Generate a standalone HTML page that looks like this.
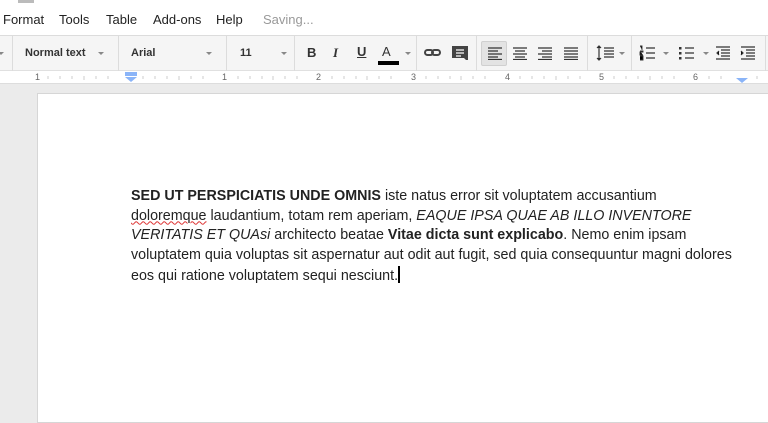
<!DOCTYPE html>
<html><head><style>
*{margin:0;padding:0;box-sizing:border-box}
body{width:768px;height:410px;overflow:hidden;background:#ebebeb;font-family:"Liberation Sans",Arial,sans-serif;position:relative}
.menu{position:absolute;left:0;top:0;width:768px;height:35px;background:#fff;font-size:13px;color:#222}
.menu span{position:absolute;top:12px}
.tb{position:absolute;left:0;top:35px;width:768px;height:36px;background:#f5f5f5;border-top:1px solid #dcdcdc;border-bottom:1px solid #e0e0e0}
.sep{position:absolute;top:0;width:1px;height:35px;background:#dcdcdc}
.t{position:absolute;font-size:11px;color:#333;font-weight:bold;top:11px}
.dd{position:absolute;top:16px;width:0;height:0;border-left:3px solid transparent;border-right:3px solid transparent;border-top:3px solid #888}
.ruler{position:absolute;left:0;top:71px;width:768px;height:13px;background:#fff;border-bottom:1px solid #ddd}
.ruler span{position:absolute;top:1px;font-size:9px;color:#666}
.page{position:absolute;left:37px;top:93px;width:740px;height:330px;background:#fff;border:1px solid #d6d6d6}
.txt{position:absolute;left:131px;top:187px;width:605px;font-size:14.3px;line-height:19.7px;color:#222}
.ic{position:absolute}
</style></head><body>
<div class="menu">
<span style="left:-1px;top:-6px;width:14px;height:4px;background:#aaa;display:block;position:absolute"></span>
<span style="left:18px;top:-6px;width:16px;height:9px;background:#bbb;position:absolute"></span>
<span style="left:3px">Format</span><span style="left:59px">Tools</span><span style="left:106px">Table</span><span style="left:153px">Add-ons</span><span style="left:216px">Help</span><span style="left:263px;color:#999">Saving...</span>
</div>
<div class="tb">
<div class="dd" style="left:-2px"></div>
<div class="sep" style="left:12px"></div>
<span class="t" style="left:25px;font-weight:bold">Normal text</span><div class="dd" style="left:98px"></div>
<div class="sep" style="left:118px"></div>
<span class="t" style="left:131px">Arial</span><div class="dd" style="left:206px"></div>
<div class="sep" style="left:226px"></div>
<span class="t" style="left:240px">11</span><div class="dd" style="left:281px"></div>
<div class="sep" style="left:294px"></div>
<span class="t" style="left:307px;font-size:13px;top:9px">B</span>
<span class="t" style="left:333px;font-size:13px;top:9px;font-style:italic;font-family:'Liberation Serif',serif">I</span>
<span class="t" style="left:357px;font-size:13px;top:8px;text-decoration:underline">U</span>
<span class="t" style="left:382px;font-size:13px;top:8px;font-weight:normal">A</span>
<div style="position:absolute;left:378px;top:25px;width:21px;height:4px;background:#000"></div>
<div class="dd" style="left:405px"></div>
<div class="sep" style="left:416px"></div>
<svg class="ic" style="left:424px;top:10px" width="18" height="14"><rect x="1" y="4" width="8" height="5" rx="2.5" fill="none" stroke="#444" stroke-width="2"/><rect x="8" y="4" width="8" height="5" rx="2.5" fill="none" stroke="#444" stroke-width="2"/></svg>
<svg class="ic" style="left:451px;top:9px" width="18" height="16"><path d="M1 1h16v14h-2l-2-2H1z" fill="#444"/><path d="M5 5h8M5 8h8M5 11h5" stroke="#fff" stroke-width="1.3"/></svg>
<div class="sep" style="left:476px"></div>
<div style="position:absolute;left:481px;top:5px;width:26px;height:25px;background:#e3e3e3;border:1px solid #d0d0d0;border-radius:2px"></div>
<svg class="ic" style="left:486px;top:10px" width="110" height="14" stroke="#333" stroke-width="1.2">
<path d="M2 2h14M2 5h10M2 8h14M2 11h10M2 13.5h14"/>
<path d="M27 2h14M29 5h10M27 8h14M29 11h10M27 13.5h14"/>
<path d="M52 2h14M56 5h10M52 8h14M56 11h10M52 13.5h14"/>
<path d="M78 2h14M78 5h14M78 8h14M78 11h14M78 13.5h14"/>
</svg>
<div class="sep" style="left:587px"></div>
<svg class="ic" style="left:596px;top:9px" width="30" height="16" stroke="#333" stroke-width="1.2"><path d="M3 1v14M1 3l2-2 2 2M1 13l2 2 2-2M8 3h10M8 6h10M8 9h10M8 12h10"/></svg>
<div class="dd" style="left:619px"></div>
<div class="sep" style="left:631px"></div>
<svg class="ic" style="left:639px;top:9px" width="120" height="16" stroke="#333" stroke-width="1.2"><path d="M7 3h9M7 8h9M7 13h9"/><path d="M1 1h2v4M1 6h3v1H1v3h3M1 11h3v4H1" stroke-width="0.9"/>
<path d="M46 3h9M46 8h9M46 13h9"/><rect x="40" y="2" width="2.5" height="2.5" fill="#333" stroke="none"/><rect x="40" y="7" width="2.5" height="2.5" fill="#333" stroke="none"/><rect x="40" y="12" width="2.5" height="2.5" fill="#333" stroke="none"/>
<path d="M77 2h14M82 5h9M82 8h9M82 11h9M77 14h14"/><path d="M80 6l-2 2 2 2" />
<path d="M102 2h14M107 5h9M107 8h9M107 11h9M102 14h14"/><path d="M102 6l2 2-2 2"/></svg>
<div class="dd" style="left:663px"></div><div class="dd" style="left:703px"></div>
<div class="sep" style="left:765px"></div>
</div>
<div class="ruler">
<span style="left:35px">1</span><span style="left:222px">1</span><span style="left:316px">2</span><span style="left:411px">3</span><span style="left:505px">4</span><span style="left:599px">5</span><span style="left:693px">6</span>
<svg style="position:absolute;left:0;top:0" width="768" height="13"><g stroke="#ccc" stroke-width="1">
<path d="M48 5v3M60 5v3M72 5v3M84 5v4M96 5v3M108 5v3M143 5v3M155 5v3M167 5v3M179 5v4M191 5v3M203 5v3M238 5v3M250 5v3M262 5v3M273 5v4M285 5v3M297 5v3M332 5v3M344 5v3M356 5v3M367 5v4M379 5v3M391 5v3M426 5v3M438 5v3M450 5v3M461 5v4M473 5v3M485 5v3M520 5v3M532 5v3M544 5v3M556 5v4M568 5v3M580 5v3M614 5v3M626 5v3M638 5v3M650 5v4M662 5v3M674 5v3M709 5v3M721 5v3M757 5v3"/></g>
<rect x="125" y="1" width="12" height="4" fill="#8ab4f8"/><path d="M125 6h12l-6 5z" fill="#8ab4f8"/><path d="M736 7h12l-6 5z" fill="#8ab4f8"/></svg>
</div>
<div class="page"></div>
<div class="txt"><b>SED UT PERSPICIATIS UNDE OMNIS</b> iste natus error sit voluptatem accusantium <span style="text-decoration:underline wavy #d33;text-decoration-thickness:1px">doloremque</span> laudantium, totam rem aperiam, <i>EAQUE IPSA QUAE AB ILLO INVENTORE VERITATIS ET QUAsi</i> architecto beatae <b>Vitae dicta sunt explicabo</b>. Nemo enim ipsam voluptatem quia voluptas sit aspernatur aut odit aut fugit, sed quia consequuntur magni dolores eos qui ratione voluptatem sequi nesciunt.<span style="display:inline-block;width:2px;height:17px;background:#000;vertical-align:-3px"></span></div>
</body></html>
